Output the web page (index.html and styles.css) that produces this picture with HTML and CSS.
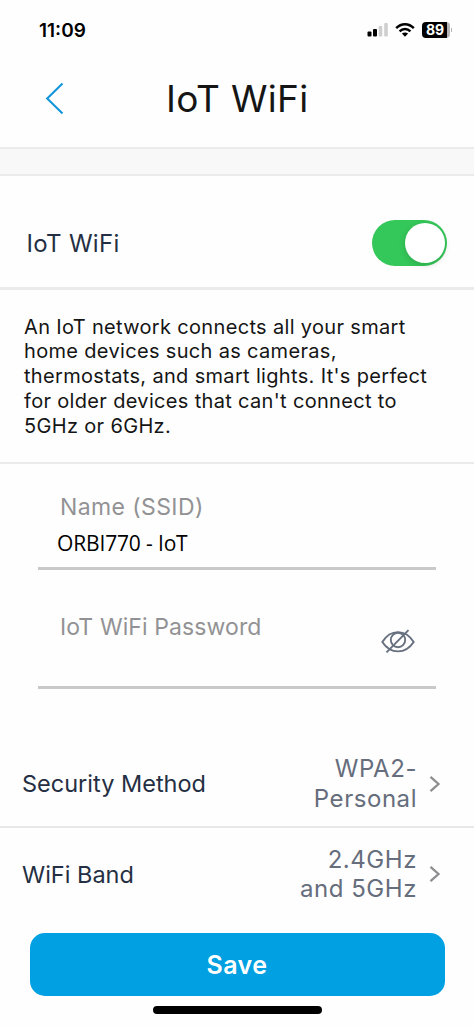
FILE: index.html
```
<!DOCTYPE html>
<html lang="en">

<head>
    <meta charset="UTF-8" />
    <title>IoT WiFi</title>
    <link rel="stylesheet" href="styles.css">
</head>

<body>
    <div class="status">
        <span class="time">11:09</span>
        <svg class="signal" width="22" height="16" viewBox="0 0 22 16">
            <rect x="0.5" y="9.5" width="4" height="5" rx="1" />
            <rect x="6" y="7" width="4" height="7.5" rx="1" />
            <rect x="11.7" y="4" width="3.6" height="10.5" rx="1" fill="#cfcfcf" />
            <rect x="17.2" y="1" width="3.6" height="13.5" rx="1" fill="#cfcfcf" />
        </svg>
        <svg class="wifi" width="20" height="16" viewBox="0 0 20 16">
            <g fill="none" stroke="#000" stroke-width="2.5">
                <path d="M1.2 6.1C6.2 0.9 13.8 0.9 18.8 6.1" />
                <path d="M4.6 9.3C7.7 6.3 12.3 6.3 15.4 9.3" />
            </g>
            <path d="M6.9 11.6C8.6 10 11.4 10 13.1 11.6L10 14.8z" />
        </svg>
        <div class="battery"><span>89</span></div>
        <i class="cap"></i>
    </div>
    <div class="header">
        <svg class="back" width="20" height="34" viewBox="0 0 20 34">
            <path d="M17.5 1.5L2.2 16.5L17.5 31.5" fill="none" stroke="#1296db" stroke-width="2.1" />
        </svg>
        <h1>IoT WiFi</h1>
    </div>
    <div class="band"></div>
    <div class="toggle-row">
        <span class="toggle-name">IoT WiFi</span>
        <div class="switch"><i></i></div>
    </div>
    <p class="desc">An IoT network connects all your smart<br>home devices such as cameras,<br>thermostats, and smart lights. It's perfect<br>for older devices that can't connect to<br>5GHz or 6GHz.</p>
    <div class="form">
        <div class="field">
            <label class="ssid">Name (SSID)</label>
            <div class="value">ORBI770 - IoT</div>
        </div>
        <div class="field">
            <label class="pass">IoT WiFi Password</label>
            <svg class="eye" width="34" height="26" viewBox="0 0 34 26">
                <g fill="none" stroke="#66707f" stroke-width="1.9">
                    <path d="M1.3 13C9.5-0.2 24.5-0.2 32.7 13C24.5 25.5 9.5 25.5 1.3 13z" stroke-linejoin="round" />
                    <circle cx="17" cy="11" r="7.2" />
                    <path d="M5.5 23.3L27.5 1.2" />
                </g>
            </svg>
        </div>
    </div>
    <div class="row">
        <span class="name">Security Method</span>
        <span class="choice">WPA2-<br>Personal</span>
        <svg class="arrow" width="12" height="18" viewBox="0 0 12 18">
            <path d="M1.5 1.8L9.5 9L1.5 16.2" fill="none" stroke="#8e8e90" stroke-width="2.3" />
        </svg>
    </div>
    <div class="row last">
        <span class="name">WiFi Band</span>
        <span class="choice">2.4GHz<br>and 5GHz</span>
        <svg class="arrow" width="12" height="18" viewBox="0 0 12 18">
            <path d="M1.5 1.8L9.5 9L1.5 16.2" fill="none" stroke="#8e8e90" stroke-width="2.3" />
        </svg>
    </div>
    <button class="save">Save</button>
    <div class="home"></div>
</body>

</html>
```
FILE: styles.css
```
* {
    margin: 0;
    padding: 0;
    box-sizing: border-box;
}

body {
    width: 474px;
    height: 1026px;
    overflow: hidden;
    background: #fefefe;
    font-family: Inter, "Liberation Sans", sans-serif;
    color: #151515;
}

svg {
    display: block;
    flex: none;
}

.status {
    display: flex;
    align-items: center;
    height: 60px;
    padding: 0 22px 0 39px;
}

.time {
    flex: 1;
    font-size: 19px;
    font-weight: 600;
    color: #000;
}

.wifi {
    margin: 0 7px 0 6px;
}

.battery {
    width: 28px;
    height: 16px;
    border-radius: 4px;
    background: linear-gradient(90deg, #000 25px, #b5b5b5 25px);
    color: #fff;
    font-size: 14px;
    font-weight: 700;
    line-height: 16px;
    padding-left: 4px;
}

.cap {
    width: 1px;
    height: 4px;
    margin-left: 1px;
    background: #b5b5b5;
}

.header {
    display: flex;
    align-items: center;
    height: 87px;
    padding: 0 0 10px 45px;
}

h1 {
    margin-left: 101px;
    font-size: 37px;
    font-weight: 400;
    letter-spacing: 0.35px;
    white-space: nowrap;
}

.band {
    height: 29px;
    border-top: 2px solid #ebebeb;
    border-bottom: 2px solid #ebebeb;
    background: #f8f8f8;
}

.toggle-row {
    display: flex;
    align-items: center;
    justify-content: space-between;
    height: 114px;
    padding: 22px 27px 0 26.5px;
    border-bottom: 3px solid #ebebeb;
}

.toggle-name {
    padding-top: 1px;
    font-size: 24px;
    letter-spacing: 0.3px;
    color: #252f43;
}

.switch {
    width: 75px;
    height: 46px;
    padding: 3px;
    border-radius: 23px;
    background: #34c759;
}

.switch i {
    display: block;
    width: 40px;
    height: 40px;
    margin-left: 29.5px;
    border-radius: 50%;
    background: #fff;
    box-shadow: 0 2px 6px rgba(0, 0, 0, 0.15);
}

.desc {
    height: 174px;
    padding: 24.5px 0 0 24px;
    border-bottom: 2px solid #ebebeb;
    font-size: 20px;
    line-height: 24.75px;
    letter-spacing: 0.33px;
    white-space: nowrap;
}

.form {
    height: 279px;
    padding: 0 38px;
}

.field {
    position: relative;
    height: 119px;
    padding: 29px 0 0 22px;
    border-bottom: 3px solid #c9c9c9;
}

.field:first-child {
    height: 106px;
}

label {
    display: block;
    font-size: 23px;
    line-height: 28px;
    color: #929294;
}

.ssid {
    letter-spacing: 0.4px;
}

.pass {
    padding-top: 14px;
    letter-spacing: 0.1px;
}

.value {
    margin: 8px 0 0 -3px;
    font-family: "Open Sans", sans-serif;
    font-size: 21px;
    line-height: 28px;
    letter-spacing: -0.15px;
    color: #000;
}

.eye {
    position: absolute;
    top: 59px;
    right: 21px;
}

.row {
    display: flex;
    align-items: center;
    height: 85px;
    padding: 0 33px 2px 22px;
    border-bottom: 2px solid #e6e8e9;
}

.last {
    height: 93px;
    padding-bottom: 1px;
    border: 0;
}

.name {
    flex: 1;
    font-size: 23.5px;
    color: #252f43;
}

.choice {
    font-size: 24px;
    line-height: 29.5px;
    letter-spacing: 0.55px;
    text-align: right;
    color: #666d7c;
}

.arrow {
    margin-left: 12px;
}

.save {
    display: block;
    width: 415px;
    height: 63px;
    margin: 12px 0 0 29.5px;
    border: 0;
    border-radius: 15px;
    background: #00a0e2;
    color: #fff;
    font-family: inherit;
    font-size: 25px;
    font-weight: 600;
    letter-spacing: 0.5px;
}

.home {
    width: 169px;
    height: 8px;
    margin: 10px 0 0 152.5px;
    border-radius: 4px;
    background: #000;
}
```
